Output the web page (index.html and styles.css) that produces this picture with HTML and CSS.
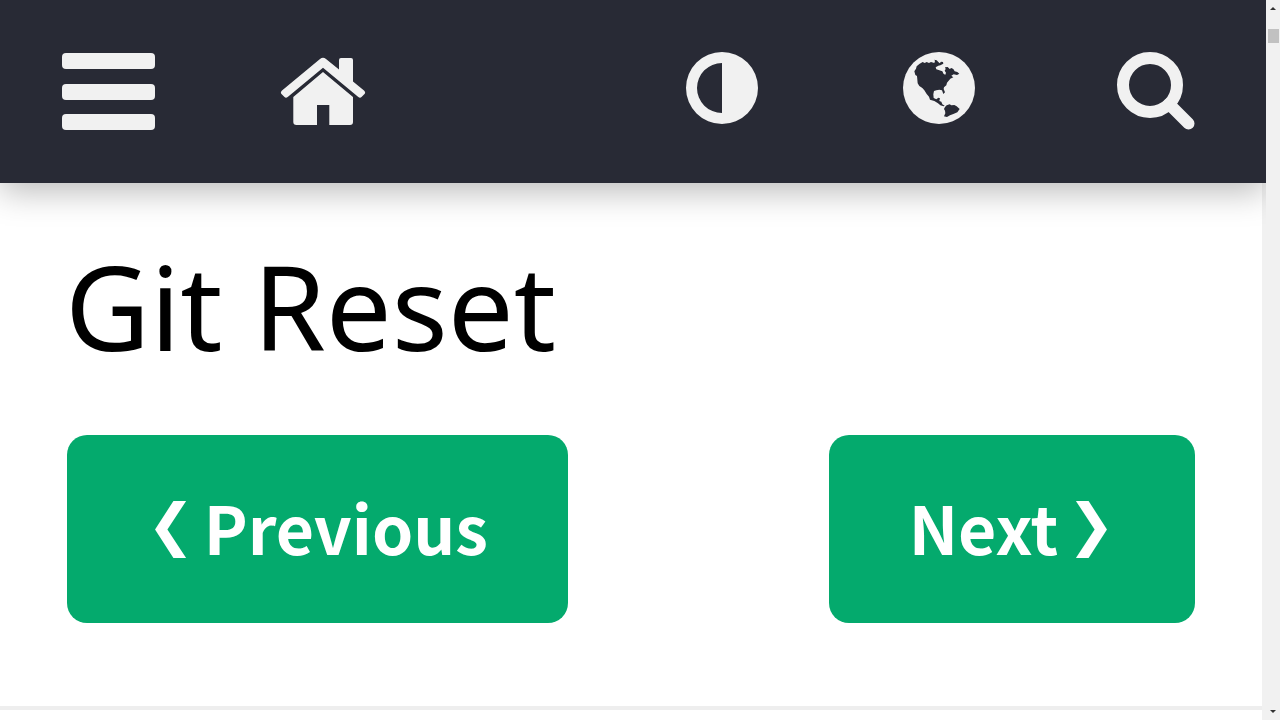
FILE: index.html
```html
<!DOCTYPE html>
<html lang="en">
<head>
<meta charset="utf-8">
<meta name="viewport" content="width=device-width, initial-scale=1">
<title>Git Reset</title>
<link rel="stylesheet" href="styles.css">
</head>
<body>
<div class="window">
  <div class="page">
    <header class="topbar">
      <nav class="topbar-group topbar-start" aria-label="Site">
        <button class="icon-button" type="button" aria-label="Menu">
          <svg class="icon" viewBox="0 0 96 96" aria-hidden="true">
            <rect x="1" y="10" width="93" height="16" rx="4"/>
            <rect x="1" y="41" width="93" height="16" rx="4"/>
            <rect x="1" y="71" width="93" height="16" rx="4"/>
          </svg>
        </button>
        <a class="icon-button" href="#" aria-label="Home">
          <svg class="icon" viewBox="0 0 96 96" aria-hidden="true">
            <path d="M45 16Q48 13.500 51 16L64 26.500V17Q64 15 66 15H76Q78 15 78 17V38.500L89 47.500Q91 49.500 89.500 51L86.500 54Q85 55.500 83 53.700L48 24.700L13 53.700Q11 55.500 9.500 54L6.500 51Q5 49.500 7 47.500Z"/>
            <path d="M48 29L78 54V79Q78 82 75 82H54.300V62H42V82H21.500Q18.300 82 18.300 79V54Z"/>
          </svg>
        </a>
      </nav>
      <div class="topbar-group topbar-end">
        <button class="icon-button" type="button" aria-label="Toggle contrast">
          <svg class="icon" viewBox="0 0 96 96" aria-hidden="true">
            <path fill-rule="evenodd" d="M48 9a36 36 0 1 1 0 72a36 36 0 1 1 0-72ZM48 20a25 25 0 0 0 0 50Z"/>
          </svg>
        </button>
        <button class="icon-button" type="button" aria-label="Language">
          <svg class="icon" viewBox="0 0 96 96" aria-hidden="true">
            <circle cx="48" cy="45" r="36"/>
            <g class="land" transform="translate(-1 -3) scale(.33333)">
              <path d="M73 94L78 86L80 79L88 72L98 66L104 69L110 66L117 69L123 66L133 69L135 63L133 59L140 61L145 66L149 70L153 65L159 66L160 71L151 76L145 77L137 82L139 88L148 91L157 94L161 102L166 104L168 98L164 92L167 87L165 82L173 81L179 87L184 84L190 87L194 94L202 96L208 101L201 105L191 103L184 107L190 112L181 116L176 122L171 128L169 136L162 142L161 147L165 157L160 162L156 151L148 149L139 151L132 153L130 163L131 174L139 178L145 173L150 175L148 183L154 185L157 193L164 197L161 199L151 196L144 190L133 183L120 179L117 170L110 162L103 151L97 144L88 138L83 130L81 108L76 105Z"/>
              <path d="M165 201L170 196L179 193L184 196L193 195L200 199L209 207L202 217L190 222L180 226L171 231L162 229L166 220L165 212L162 207Z"/>
            </g>
          </svg>
        </button>
        <button class="icon-button" type="button" aria-label="Search">
          <svg class="icon icon-line" viewBox="0 0 96 96" aria-hidden="true">
            <circle cx="42" cy="42" r="27"/>
            <path d="M61 61L80.500 80.500"/>
          </svg>
        </button>
      </div>
    </header>
    <main class="content">
      <h1 class="title">Git Reset</h1>
      <nav class="pager" aria-label="Chapters">
        <a class="pager-link" href="#"><span class="chevron">❮</span> Previous</a>
        <a class="pager-link" href="#">Next <span class="chevron">❯</span></a>
      </nav>
      <hr class="rule">
    </main>
  </div>
  <div class="scrollbar" aria-hidden="true">
    <svg class="arrow" viewBox="0 0 14 14"><path d="M4 9L7 6L10 9Z"/></svg>
    <div class="track"><div class="thumb"></div></div>
    <svg class="arrow" viewBox="0 0 14 14"><path d="M4 5H10L7 8Z"/></svg>
  </div>
</div>
</body>
</html>
```
FILE: styles.css
```css
* {
  box-sizing: border-box;
}

body {
  margin: 0;
  background: #fff;
  color: #000;
  font-family: "Noto Sans", "Open Sans", sans-serif;
}

.window {
  display: flex;
  height: 100vh;
  overflow: hidden;
}

.page {
  flex: 1;
  min-width: 0;
  display: flex;
  flex-direction: column;
  overflow: hidden;
}

.topbar {
  display: flex;
  justify-content: space-between;
  padding: 43px 62px 44px 61px;
  background: #282a35;
  box-shadow: 0 8px 32px rgba(0, 0, 0, 0.28);
  z-index: 1;
}

.topbar-group {
  display: flex;
}

.topbar-start {
  gap: 118px;
}

.topbar-end {
  gap: 121px;
}

.icon-button {
  display: block;
  padding: 0;
  border: 0;
  background: none;
  cursor: pointer;
}

.icon {
  display: block;
  width: 96px;
  height: 96px;
  fill: #f1f1f1;
}

.icon-line {
  fill: none;
  stroke: #f1f1f1;
  stroke-width: 12;
  stroke-linecap: round;
}

.land {
  fill: #282a35;
}

.content {
  flex: 1;
  padding-top: 43px;
  border-right: 4px solid #f1f1f1;
}

.title {
  margin: 0 0 49px;
  padding: 0 65px;
  font-size: 117px;
  font-weight: 400;
  line-height: 160px;
}

.pager {
  display: flex;
  justify-content: space-between;
  padding: 0 67px;
}

.pager-link {
  display: flex;
  align-items: flex-start;
  gap: 9px;
  padding: 41px 80px 47px;
  border-radius: 20px;
  background: #04aa6d;
  color: #fff;
  font-family: "Noto Sans CJK SC", sans-serif;
  font-size: 66px;
  font-weight: 600;
  line-height: 100px;
  text-decoration: none;
  white-space: nowrap;
}

.chevron {
  font-family: "DejaVu Sans", sans-serif;
  font-size: 57px;
  line-height: 96px;
}

.rule {
  height: 4px;
  margin: 83px 0 0;
  border: 0;
  background: #eee;
}

.scrollbar {
  display: flex;
  flex-direction: column;
  width: 14px;
  background: #f1f1f1;
}

.arrow {
  display: block;
  width: 14px;
  height: 16px;
  fill: #333;
}

.track {
  flex: 1;
  padding: 13px 1px 0 2px;
}

.thumb {
  height: 14px;
  background: #c1c1c1;
}
```
